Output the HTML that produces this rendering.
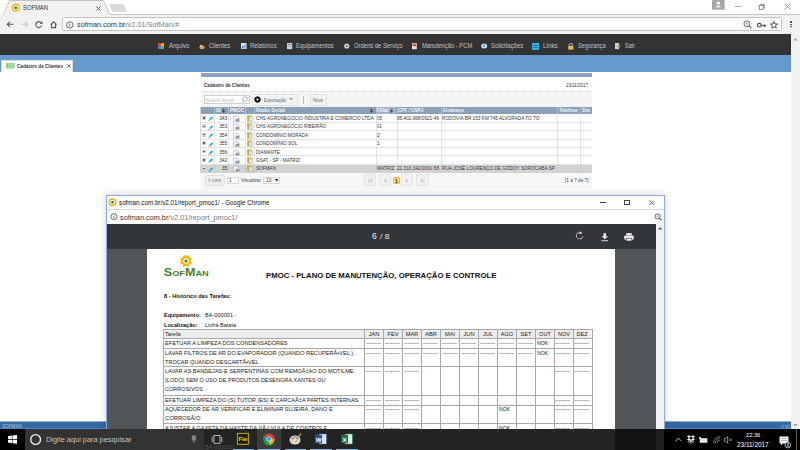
<!DOCTYPE html>
<html><head><meta charset="utf-8">
<style>
*{margin:0;padding:0;box-sizing:border-box}
html,body{width:800px;height:450px;overflow:hidden;background:#fff;font-family:"Liberation Sans",sans-serif}
.a{position:absolute}
.t{position:absolute;white-space:nowrap;line-height:1}
svg{position:absolute;overflow:visible}
</style></head><body>
<div class="a" style="left:0px;top:0px;width:800px;height:14px;background:#fff"></div>
<div class="a" style="left:0px;top:14px;width:800px;height:20px;background:#f2f2f2"></div>
<svg style="left:0;top:0" width="800" height="15"><path d="M0 14.5 H3.5 L9.5 0.5 H103.5 L109.5 14.5 H800" fill="#f2f2f2" stroke="#c4c4c4" stroke-width="1"/><path d="M109 4 H122.5 Q123.5 4 124 5 L126.5 11 Q127 12 126 12 H113.5 Q112.5 12 112 11 L109.5 5 Q109 4 110 4Z" fill="#dadada"/></svg>
<div class="a" style="left:0px;top:14px;width:3px;height:1px;background:#f2f2f2"></div>
<svg style="left:11px;top:3px" width="10" height="10"><circle cx="4.8" cy="4.8" r="4" fill="#f3b517"/><circle cx="4.8" cy="4.8" r="2.5" fill="#fff"/><circle cx="4.8" cy="4.8" r="1.4" fill="#1f6b1f"/></svg>
<svg style="left:23px;top:-10px" width="10" height="30"><text x="0" y="20.00" font-family="Liberation Sans" font-size="6.6" fill="#333" textLength="25" lengthAdjust="spacingAndGlyphs" style="white-space:pre;">SOFMAN</text></svg>
<svg style="left:96px;top:6px" width="5" height="5"><path d="M0.5 0.5L4.5 4.5M4.5 0.5L0.5 4.5" stroke="#555" stroke-width="1"/></svg>
<svg style="left:712px;top:0" width="13" height="10"><rect width="12.6" height="9.6" fill="#a6a6a6"/><circle cx="6.3" cy="3.2" r="1.6" fill="#fff"/><path d="M3.3 7.2 Q6.3 4.4 9.3 7.2 Z" fill="#fff"/></svg>
<div class="a" style="left:735.3px;top:5.5px;width:5.3px;height:0.8px;background:#aaa"></div>
<svg style="left:759px;top:4px" width="7" height="6"><rect x="0.4" y="1.4" width="3.9" height="3.9" fill="none" stroke="#777" stroke-width="0.8"/><path d="M1.6 1.4V0.4H5.3V4.1H4.3" fill="none" stroke="#777" stroke-width="0.8"/></svg>
<svg style="left:784px;top:3px" width="8" height="8"><path d="M0.5 0.5L6.5 6.5M6.5 0.5L0.5 6.5" stroke="#999" stroke-width="0.9"/></svg>
<svg style="left:6px;top:21px" width="9" height="8"><path d="M7.5 3.3H1.5M4 0.8L1.2 3.3L4 5.8" fill="none" stroke="#555" stroke-width="1.1"/></svg>
<svg style="left:21px;top:21px" width="9" height="8"><path d="M0.5 3.3H6.5M4 0.8L6.8 3.3L4 5.8" fill="none" stroke="#c6c6c6" stroke-width="1.1"/></svg>
<svg style="left:35px;top:21px" width="9" height="8"><path d="M6.3 2A3 3 0 1 0 6.6 4.6" fill="none" stroke="#555" stroke-width="1.1"/><path d="M7.5 0.3V3H4.8Z" fill="#555"/></svg>
<svg style="left:50px;top:20.5px" width="9" height="8"><path d="M0.6 3.6L3.6 0.8L6.6 3.6M1.6 2.9V6.6H5.6V2.9" fill="none" stroke="#555" stroke-width="1.1"/></svg>
<div class="a" style="left:62px;top:17px;width:719.5px;height:14.3px;background:#fff;border:1px solid #c2c2c2;border-radius:1.5px"></div>
<svg style="left:66px;top:20.5px" width="8" height="8"><circle cx="3.8" cy="3.9" r="3.2" fill="none" stroke="#555" stroke-width="0.9"/><rect x="3.35" y="3.2" width="0.9" height="2.4" fill="#555"/><rect x="3.35" y="1.9" width="0.9" height="0.8" fill="#555"/></svg>
<svg style="left:76.8px;top:7px" width="10" height="30"><text x="0" y="20.00" font-family="Liberation Sans" font-size="7.35" fill="#333" textLength="102" lengthAdjust="spacingAndGlyphs" style="white-space:pre;">sofman.com.br<tspan fill="#808080">/v2.01/SofMan/#</tspan></text></svg>
<svg style="left:743px;top:20px" width="10" height="10"><circle cx="3.8" cy="3.8" r="2.9" fill="none" stroke="#555" stroke-width="0.9"/><path d="M5.9 5.9L8.3 8.3" stroke="#555" stroke-width="1.1"/><path d="M2.5 3.8H5.1M3.8 2.5V5.1" stroke="#777" stroke-width="0.6"/></svg>
<svg style="left:757px;top:21.5px" width="10" height="7"><circle cx="2.3" cy="3.2" r="1.8" fill="none" stroke="#444" stroke-width="1.1"/><path d="M4 3.2H8.6M7.2 3.2V5M8.4 3.2V4.6" stroke="#444" stroke-width="1.1"/></svg>
<svg style="left:770px;top:20.5px" width="9" height="9"><path d="M4 0.6L5 3H7.7L5.5 4.6L6.3 7.3L4 5.7L1.7 7.3L2.5 4.6L0.3 3H3Z" fill="none" stroke="#444" stroke-width="0.9"/></svg>
<div class="a" style="left:790.3px;top:21.3px;width:1.3px;height:1.3px;background:#555"></div>
<div class="a" style="left:790.3px;top:23.6px;width:1.3px;height:1.3px;background:#555"></div>
<div class="a" style="left:790.3px;top:25.9px;width:1.3px;height:1.3px;background:#555"></div>
<div class="a" style="left:0px;top:34px;width:791px;height:21px;background:#333"></div>
<svg style="left:168.8px;top:28px" width="10" height="30"><text x="0" y="20.00" font-family="Liberation Sans" font-size="6.8" fill="#c4c4c4" textLength="20.4" lengthAdjust="spacingAndGlyphs" style="white-space:pre;">Arquivo</text></svg>
<svg style="left:158px;top:42.8px" width="7" height="7"><rect width="3" height="3" fill="#e8412b"/><rect x="3" width="3" height="3" fill="#f2bb10"/><rect y="3" width="3" height="3" fill="#2a8ee8"/><rect x="3" y="3" width="3" height="3" fill="#7db11f"/></svg>
<svg style="left:208.8px;top:28px" width="10" height="30"><text x="0" y="20.00" font-family="Liberation Sans" font-size="6.8" fill="#c4c4c4" textLength="21.2" lengthAdjust="spacingAndGlyphs" style="white-space:pre;">Clientes</text></svg>
<svg style="left:199px;top:43.5px" width="6" height="6"><ellipse cx="3" cy="3.2" rx="2.6" ry="2" fill="#d89a6a"/><circle cx="2" cy="1.8" r="1.1" fill="#e8b888"/></svg>
<svg style="left:250px;top:28px" width="10" height="30"><text x="0" y="20.00" font-family="Liberation Sans" font-size="6.8" fill="#c4c4c4" textLength="26.6" lengthAdjust="spacingAndGlyphs" style="white-space:pre;">Relatórios</text></svg>
<svg style="left:240.5px;top:43px" width="6" height="7"><rect width="5.5" height="6" fill="#dfe6ef"/><rect x="0.8" y="3" width="1.2" height="2.5" fill="#3a7bd5"/><rect x="2.5" y="1.5" width="1.2" height="4" fill="#5c9ee8"/><rect x="4" y="0.8" width="1.2" height="4.7" fill="#f0c030"/></svg>
<svg style="left:296.25px;top:28px" width="10" height="30"><text x="0" y="20.00" font-family="Liberation Sans" font-size="6.8" fill="#c4c4c4" textLength="37.6" lengthAdjust="spacingAndGlyphs" style="white-space:pre;">Equipamentos</text></svg>
<svg style="left:286.6px;top:42.8px" width="6" height="7"><rect width="5.2" height="6.2" fill="#c8d0dc"/><rect x="1" y="1" width="3.2" height="1.2" fill="#7e8ea8"/><rect x="1" y="3" width="3.2" height="0.8" fill="#9aa6b8"/></svg>
<svg style="left:353.7px;top:28px" width="10" height="30"><text x="0" y="20.00" font-family="Liberation Sans" font-size="6.8" fill="#c4c4c4" textLength="48.4" lengthAdjust="spacingAndGlyphs" style="white-space:pre;">Ordens de Serviço</text></svg>
<svg style="left:343.5px;top:43px" width="6" height="6"><circle cx="2.8" cy="3" r="2.6" fill="#c9ced6"/><circle cx="2.8" cy="3" r="1" fill="#6b7686"/></svg>
<svg style="left:421.6px;top:28px" width="10" height="30"><text x="0" y="20.00" font-family="Liberation Sans" font-size="6.8" fill="#c4c4c4" textLength="50.3" lengthAdjust="spacingAndGlyphs" style="white-space:pre;">Manutenção - PCM</text></svg>
<svg style="left:411.6px;top:42.8px" width="6" height="7"><rect width="4.8" height="6.2" fill="#e8e8e8"/><rect x="0.5" y="0.5" width="3.8" height="3" fill="#e0504a"/></svg>
<svg style="left:490.75px;top:28px" width="10" height="30"><text x="0" y="20.00" font-family="Liberation Sans" font-size="6.8" fill="#c4c4c4" textLength="32.3" lengthAdjust="spacingAndGlyphs" style="white-space:pre;">Solicitações</text></svg>
<svg style="left:480.6px;top:43.2px" width="7" height="6"><ellipse cx="3.2" cy="2.9" rx="3" ry="2.5" fill="#d6e4f2"/><circle cx="3.2" cy="2.9" r="1.3" fill="#6a9bd8"/></svg>
<svg style="left:543.4px;top:28px" width="10" height="30"><text x="0" y="20.00" font-family="Liberation Sans" font-size="6.8" fill="#c4c4c4" textLength="14.8" lengthAdjust="spacingAndGlyphs" style="white-space:pre;">Links</text></svg>
<svg style="left:532.4px;top:42.5px" width="8" height="8"><rect width="7" height="7" fill="#3ab0e8"/><rect x="1" y="2.2" width="5" height="0.7" fill="#1a5c8a"/><rect x="1" y="4.2" width="5" height="0.7" fill="#1a5c8a"/></svg>
<svg style="left:577.5px;top:28px" width="10" height="30"><text x="0" y="20.00" font-family="Liberation Sans" font-size="6.8" fill="#c4c4c4" textLength="27.6" lengthAdjust="spacingAndGlyphs" style="white-space:pre;">Segurança</text></svg>
<svg style="left:567.9px;top:42.5px" width="6" height="7"><path d="M1.2 3V2A1.6 1.6 0 0 1 4.4 2V3" fill="none" stroke="#ccc" stroke-width="0.8"/><rect x="0.3" y="3" width="5" height="3.6" fill="#e8c040"/></svg>
<svg style="left:624.75px;top:28px" width="10" height="30"><text x="0" y="20.00" font-family="Liberation Sans" font-size="6.8" fill="#c4c4c4" textLength="9.7" lengthAdjust="spacingAndGlyphs" style="white-space:pre;">Sair</text></svg>
<svg style="left:615.1px;top:42.8px" width="6" height="7"><rect width="4" height="6.2" fill="#d0d0d0"/><path d="M2 3.1H5.2M3.8 1.8L5.4 3.1L3.8 4.4" stroke="#38b838" stroke-width="1" fill="none"/></svg>
<div class="a" style="left:0px;top:55px;width:791px;height:17px;background:#6699cc"></div>
<div class="a" style="left:1px;top:59.5px;width:72px;height:12.5px;background:#fff;border:1px solid #dcdcdc;border-bottom:none;border-radius:1px 1px 0 0"></div>
<svg style="left:6px;top:63px" width="9" height="6"><rect width="8.5" height="5.5" fill="#8fd28f"/><path d="M2.8 0.5V5M5.6 0.5V5" stroke="#d8f0d8" stroke-width="0.6"/></svg>
<svg style="left:17px;top:48px" width="10" height="30"><text x="0" y="20.00" font-family="Liberation Sans" font-size="5" fill="#333" textLength="46" lengthAdjust="spacingAndGlyphs" font-weight="bold" style="white-space:pre;">Cadastro de Clientes</text></svg>
<svg style="left:66.5px;top:63.5px" width="4" height="4"><path d="M0.3 0.3L3.5 3.5M3.5 0.3L0.3 3.5" stroke="#444" stroke-width="0.9"/></svg>
<div class="a" style="left:791px;top:34px;width:9px;height:395px;background:#f1f1f1"></div>
<svg style="left:793px;top:37.5px" width="5" height="3"><path d="M0 2.6L2.4 0L4.8 2.6Z" fill="#a3a3a3"/></svg>
<svg style="left:793px;top:424px" width="5" height="3"><path d="M0 0L2.4 2.6L4.8 0Z" fill="#a3a3a3"/></svg>
<div class="a" style="left:0px;top:421px;width:791px;height:1px;background:#9ab0c8"></div>
<div class="a" style="left:0px;top:421.8px;width:791px;height:7.2px;background:#3568a0"></div>
<div class="a" style="left:0px;top:428.3px;width:791px;height:0.8px;background:#4a86c8"></div>
<svg style="left:2px;top:407px" width="10" height="30"><text x="0" y="20.60" font-family="Liberation Sans" font-size="4.6" fill="#b4c4d6" textLength="20" lengthAdjust="spacingAndGlyphs" style="white-space:pre;">SOFMAN</text></svg>
<svg style="left:781px;top:407px" width="10" height="30"><text x="0" y="20.60" font-family="Liberation Sans" font-size="4.6" fill="#8aa4c4" textLength="9" lengthAdjust="spacingAndGlyphs" style="white-space:pre;">trial</text></svg>
<div class="a" style="left:200.5px;top:73px;width:391.5px;height:116px;background:#fff;border-radius:0 0 2px 2px"></div>
<div class="a" style="left:200.5px;top:73px;width:391.5px;height:4px;background:#8aa3c1"></div>
<svg style="left:204px;top:67px" width="10" height="30"><text x="0" y="20.00" font-family="Liberation Sans" font-size="5.2" fill="#333" textLength="45.75" lengthAdjust="spacingAndGlyphs" font-weight="bold" style="white-space:pre;">Cadastro de Clientes</text></svg>
<svg style="left:566px;top:67px" width="10" height="30"><text x="0" y="20.00" font-family="Liberation Sans" font-size="5" fill="#333" textLength="22" lengthAdjust="spacingAndGlyphs" style="white-space:pre;">23/11/2017</text></svg>
<div class="a" style="left:200.5px;top:91px;width:391.5px;height:1px;border-top:1px dotted #d6d6d6"></div>
<div class="a" style="left:200.5px;top:92px;width:391.5px;height:15px;background:#f5f5f5"></div>
<div class="a" style="left:204px;top:95px;width:46px;height:9px;background:#fff;border:1px solid #d0d0d0"></div>
<svg style="left:205.6px;top:81px" width="10" height="30"><text x="0" y="20.50" font-family="Liberation Sans" font-size="4.8" fill="#c4bccc" textLength="27.4" lengthAdjust="spacingAndGlyphs" style="white-space:pre;">Busca rápida</text></svg>
<svg style="left:240.5px;top:96px" width="7" height="7"><circle cx="4.1" cy="3" r="2.2" fill="none" stroke="#777" stroke-width="0.6"/><path d="M2.5 4.6L1 6.1" stroke="#777" stroke-width="0.7"/></svg>
<div class="a" style="left:251.5px;top:93.5px;width:46px;height:12px;background:#f2f2f2;border:1px solid #e2e2e2;border-radius:2px"></div>
<svg style="left:254px;top:95.7px" width="8" height="8"><circle cx="3.5" cy="3.5" r="2.4" fill="none" stroke="#111" stroke-width="1.4"/><path d="M3.5 0.2V6.8M0.2 3.5H6.8M1.2 1.2L5.8 5.8M5.8 1.2L1.2 5.8" stroke="#111" stroke-width="0.9"/><circle cx="3.5" cy="3.5" r="1" fill="#f2f2f2"/></svg>
<svg style="left:264px;top:81px" width="10" height="30"><text x="0" y="20.50" font-family="Liberation Sans" font-size="4.9" fill="#666" textLength="22" lengthAdjust="spacingAndGlyphs" style="white-space:pre;">Exportação</text></svg>
<svg style="left:289px;top:98.3px" width="5" height="3"><path d="M0 0H4.2L2.1 2.2Z" fill="#999"/></svg>
<div class="a" style="left:303px;top:96px;width:0.9px;height:7.5px;background:#bbb"></div>
<div class="a" style="left:309.5px;top:93.5px;width:17.5px;height:12px;background:#f2f2f2;border:1px solid #e2e2e2;border-radius:2px"></div>
<svg style="left:313px;top:81px" width="10" height="30"><text x="0" y="20.50" font-family="Liberation Sans" font-size="4.9" fill="#666" textLength="10" lengthAdjust="spacingAndGlyphs" style="white-space:pre;">Novo</text></svg>
<div class="a" style="left:200.5px;top:107.2px;width:391.5px;height:6.6px;background:#8aa0b8"></div>
<div class="a" style="left:375.6px;top:107.2px;width:20.9px;height:6.6px;background:#a3b5cc"></div>
<div class="a" style="left:214.2px;top:107.2px;width:0.7px;height:6.6px;background:#b0bfd0"></div>
<div class="a" style="left:228.2px;top:107.2px;width:0.7px;height:6.6px;background:#b0bfd0"></div>
<div class="a" style="left:245.2px;top:107.2px;width:0.7px;height:6.6px;background:#b0bfd0"></div>
<div class="a" style="left:254.4px;top:107.2px;width:0.7px;height:6.6px;background:#b0bfd0"></div>
<div class="a" style="left:375.6px;top:107.2px;width:0.7px;height:6.6px;background:#b0bfd0"></div>
<div class="a" style="left:396.5px;top:107.2px;width:0.7px;height:6.6px;background:#b0bfd0"></div>
<div class="a" style="left:441.25px;top:107.2px;width:0.7px;height:6.6px;background:#b0bfd0"></div>
<div class="a" style="left:557.2px;top:107.2px;width:0.7px;height:6.6px;background:#b0bfd0"></div>
<div class="a" style="left:579.7px;top:107.2px;width:0.7px;height:6.6px;background:#b0bfd0"></div>
<svg style="left:216px;top:92px" width="10" height="30"><text x="0" y="20.30" font-family="Liberation Sans" font-size="4.6" fill="#f2f5fa" textLength="5" lengthAdjust="spacingAndGlyphs" font-weight="bold" style="white-space:pre;">ID</text></svg>
<svg style="left:230px;top:92px" width="10" height="30"><text x="0" y="20.30" font-family="Liberation Sans" font-size="4.6" fill="#f2f5fa" textLength="14" lengthAdjust="spacingAndGlyphs" font-weight="bold" style="white-space:pre;">PMOC</text></svg>
<svg style="left:256px;top:92px" width="10" height="30"><text x="0" y="20.30" font-family="Liberation Sans" font-size="4.6" fill="#f2f5fa" textLength="29" lengthAdjust="spacingAndGlyphs" font-weight="bold" style="white-space:pre;">Razão Social</text></svg>
<svg style="left:376.9px;top:92px" width="10" height="30"><text x="0" y="20.30" font-family="Liberation Sans" font-size="4.6" fill="#f2f5fa" textLength="11" lengthAdjust="spacingAndGlyphs" font-weight="bold" style="white-space:pre;">Filial</text></svg>
<svg style="left:397.75px;top:92px" width="10" height="30"><text x="0" y="20.30" font-family="Liberation Sans" font-size="4.6" fill="#f2f5fa" textLength="25.3" lengthAdjust="spacingAndGlyphs" font-weight="bold" style="white-space:pre;">CPF / CNPJ</text></svg>
<svg style="left:442.75px;top:92px" width="10" height="30"><text x="0" y="20.30" font-family="Liberation Sans" font-size="4.6" fill="#f2f5fa" textLength="21" lengthAdjust="spacingAndGlyphs" font-weight="bold" style="white-space:pre;">Endereço</text></svg>
<svg style="left:559.1px;top:92px" width="10" height="30"><text x="0" y="20.30" font-family="Liberation Sans" font-size="4.6" fill="#f2f5fa" textLength="18.7" lengthAdjust="spacingAndGlyphs" font-weight="bold" style="white-space:pre;">Telefone</text></svg>
<svg style="left:581.7px;top:92px" width="10" height="30"><text x="0" y="20.30" font-family="Liberation Sans" font-size="4.6" fill="#f2f5fa" textLength="8.3" lengthAdjust="spacingAndGlyphs" font-weight="bold" style="white-space:pre;">Site</text></svg>
<svg style="left:222.3px;top:108.6px" width="3" height="4"><path d="M1.5 0L3 1.6H0Z M1.5 3.8L3 2.2H0Z" fill="#222"/></svg>
<svg style="left:369.75px;top:108.6px" width="3" height="4"><path d="M1.5 0L3 1.6H0Z M1.5 3.8L3 2.2H0Z" fill="#222"/></svg>
<svg style="left:389.75px;top:108.6px" width="3" height="4"><path d="M1.5 0L3 1.6H0Z M1.5 3.8L3 2.2H0Z" fill="#222"/></svg>
<div class="a" style="left:200.5px;top:113.8px;width:391.5px;height:50.34px;background:#fff"></div>
<div class="a" style="left:200.5px;top:164.14px;width:391.5px;height:8.39px;background:#d3d3d3"></div>
<div class="a" style="left:200.5px;top:121.78999999999999px;width:391.5px;height:0.8px;background:#e2e2e2"></div>
<div class="a" style="left:214.2px;top:113.8px;width:0.8px;height:8.39px;background:#e4e4e4"></div>
<div class="a" style="left:228.2px;top:113.8px;width:0.8px;height:8.39px;background:#e4e4e4"></div>
<div class="a" style="left:245.2px;top:113.8px;width:0.8px;height:8.39px;background:#e4e4e4"></div>
<div class="a" style="left:254.4px;top:113.8px;width:0.8px;height:8.39px;background:#e4e4e4"></div>
<div class="a" style="left:375.6px;top:113.8px;width:0.8px;height:8.39px;background:#e4e4e4"></div>
<div class="a" style="left:396.5px;top:113.8px;width:0.8px;height:8.39px;background:#e4e4e4"></div>
<div class="a" style="left:441.25px;top:113.8px;width:0.8px;height:8.39px;background:#e4e4e4"></div>
<div class="a" style="left:557.2px;top:113.8px;width:0.8px;height:8.39px;background:#e4e4e4"></div>
<div class="a" style="left:579.7px;top:113.8px;width:0.8px;height:8.39px;background:#e4e4e4"></div>
<div class="a" style="left:202.2px;top:116.0px;width:3.9px;height:3.9px;background:#e6e6e6;border:0.5px solid #d0d0d0"></div>
<div class="a" style="left:203.4px;top:117.2px;width:1.5px;height:1.5px;background:#666"></div>
<svg style="left:207.5px;top:116.40px" width="6" height="6"><path d="M4 1.4L2.2 3.2" stroke="#2aaee8" stroke-width="1.9" stroke-linecap="round"/><path d="M1.3 4.2L0.6 5" stroke="#665" stroke-width="0.9"/></svg>
<svg style="left:227px;top:100px" width="10" height="30"><text x="0" y="20.10" font-family="Liberation Sans" font-size="5" fill="#333" text-anchor="end" style="white-space:pre;letter-spacing:-0.2px">343</text></svg>
<svg style="left:233px;top:115.00px" width="8" height="8"><path d="M0.6 1.3H4.2L6.2 3.2V6.3H0.6Z" fill="#fbfbfb" stroke="#a4a4a4" stroke-width="0.55"/><path d="M3.6 0.4L5.6 2.1" stroke="#b0b0b0" stroke-width="0.5"/><path d="M2.6 3.6H6.3V6.6H2.6Z" fill="#9fb2c6"/><path d="M3 4.2H5.9V5.8H3Z" fill="#7f95ad"/></svg>
<svg style="left:247px;top:115.00px" width="7" height="8"><path d="M0.2 0.3H4.2V1.6H0.2Z" fill="#d8c248"/><path d="M0.2 0.3H2.2V6.5H0.2Z" fill="#c9b23a"/><path d="M2 2H5.6V6.4H2Z" fill="#e6e8ec" stroke="#9a9ea6" stroke-width="0.45"/><path d="M4.2 0.3L5.2 1.5V2H4.2Z" fill="#b8a434"/></svg>
<svg style="left:256.2px;top:100px" width="10" height="30"><text x="0" y="20.10" font-family="Liberation Sans" font-size="5" fill="#333" textLength="117.6" lengthAdjust="spacingAndGlyphs" style="white-space:pre;">CHS AGRONEGOCIO INDUSTRIA E COMERCIO LTDA</text></svg>
<svg style="left:377.1px;top:100px" width="10" height="30"><text x="0" y="20.10" font-family="Liberation Sans" font-size="5" fill="#333" textLength="4.8" lengthAdjust="spacingAndGlyphs" style="white-space:pre;">05</text></svg>
<svg style="left:397.3px;top:100px" width="10" height="30"><text x="0" y="20.10" font-family="Liberation Sans" font-size="5" fill="#333" textLength="42" lengthAdjust="spacingAndGlyphs" style="white-space:pre;">95.402.968/0621-46</text></svg>
<svg style="left:442.4px;top:100px" width="10" height="30"><text x="0" y="20.10" font-family="Liberation Sans" font-size="5" fill="#333" textLength="97.4" lengthAdjust="spacingAndGlyphs" style="white-space:pre;">RODOVIA BR 153 KM 745 ALVORADA TO TO</text></svg>
<div class="a" style="left:200.5px;top:130.17999999999998px;width:391.5px;height:0.8px;background:#e2e2e2"></div>
<div class="a" style="left:214.2px;top:122.19px;width:0.8px;height:8.39px;background:#e4e4e4"></div>
<div class="a" style="left:228.2px;top:122.19px;width:0.8px;height:8.39px;background:#e4e4e4"></div>
<div class="a" style="left:245.2px;top:122.19px;width:0.8px;height:8.39px;background:#e4e4e4"></div>
<div class="a" style="left:254.4px;top:122.19px;width:0.8px;height:8.39px;background:#e4e4e4"></div>
<div class="a" style="left:375.6px;top:122.19px;width:0.8px;height:8.39px;background:#e4e4e4"></div>
<div class="a" style="left:396.5px;top:122.19px;width:0.8px;height:8.39px;background:#e4e4e4"></div>
<div class="a" style="left:441.25px;top:122.19px;width:0.8px;height:8.39px;background:#e4e4e4"></div>
<div class="a" style="left:557.2px;top:122.19px;width:0.8px;height:8.39px;background:#e4e4e4"></div>
<div class="a" style="left:579.7px;top:122.19px;width:0.8px;height:8.39px;background:#e4e4e4"></div>
<div class="a" style="left:202.2px;top:124.39px;width:3.9px;height:3.9px;background:#e6e6e6;border:0.5px solid #d0d0d0"></div>
<div class="a" style="left:203.4px;top:125.59px;width:1.5px;height:1.5px;background:#666"></div>
<svg style="left:207.5px;top:124.79px" width="6" height="6"><path d="M4 1.4L2.2 3.2" stroke="#2aaee8" stroke-width="1.9" stroke-linecap="round"/><path d="M1.3 4.2L0.6 5" stroke="#665" stroke-width="0.9"/></svg>
<svg style="left:227px;top:108px" width="10" height="30"><text x="0" y="20.49" font-family="Liberation Sans" font-size="5" fill="#333" text-anchor="end" style="white-space:pre;letter-spacing:-0.2px">353</text></svg>
<svg style="left:233px;top:123.39px" width="8" height="8"><path d="M0.6 1.3H4.2L6.2 3.2V6.3H0.6Z" fill="#fbfbfb" stroke="#a4a4a4" stroke-width="0.55"/><path d="M3.6 0.4L5.6 2.1" stroke="#b0b0b0" stroke-width="0.5"/><path d="M2.6 3.6H6.3V6.6H2.6Z" fill="#9fb2c6"/><path d="M3 4.2H5.9V5.8H3Z" fill="#7f95ad"/></svg>
<svg style="left:247px;top:123.39px" width="7" height="8"><path d="M0.2 0.3H4.2V1.6H0.2Z" fill="#d8c248"/><path d="M0.2 0.3H2.2V6.5H0.2Z" fill="#c9b23a"/><path d="M2 2H5.6V6.4H2Z" fill="#e6e8ec" stroke="#9a9ea6" stroke-width="0.45"/><path d="M4.2 0.3L5.2 1.5V2H4.2Z" fill="#b8a434"/></svg>
<svg style="left:256.2px;top:108px" width="10" height="30"><text x="0" y="20.49" font-family="Liberation Sans" font-size="5" fill="#333" textLength="70.2" lengthAdjust="spacingAndGlyphs" style="white-space:pre;">CHS AGRONEGÓCIO RIBEIRÃO</text></svg>
<svg style="left:377.1px;top:108px" width="10" height="30"><text x="0" y="20.49" font-family="Liberation Sans" font-size="5" fill="#333" textLength="4.8" lengthAdjust="spacingAndGlyphs" style="white-space:pre;">01</text></svg>
<div class="a" style="left:200.5px;top:138.56999999999996px;width:391.5px;height:0.8px;background:#e2e2e2"></div>
<div class="a" style="left:214.2px;top:130.57999999999998px;width:0.8px;height:8.39px;background:#e4e4e4"></div>
<div class="a" style="left:228.2px;top:130.57999999999998px;width:0.8px;height:8.39px;background:#e4e4e4"></div>
<div class="a" style="left:245.2px;top:130.57999999999998px;width:0.8px;height:8.39px;background:#e4e4e4"></div>
<div class="a" style="left:254.4px;top:130.57999999999998px;width:0.8px;height:8.39px;background:#e4e4e4"></div>
<div class="a" style="left:375.6px;top:130.57999999999998px;width:0.8px;height:8.39px;background:#e4e4e4"></div>
<div class="a" style="left:396.5px;top:130.57999999999998px;width:0.8px;height:8.39px;background:#e4e4e4"></div>
<div class="a" style="left:441.25px;top:130.57999999999998px;width:0.8px;height:8.39px;background:#e4e4e4"></div>
<div class="a" style="left:557.2px;top:130.57999999999998px;width:0.8px;height:8.39px;background:#e4e4e4"></div>
<div class="a" style="left:579.7px;top:130.57999999999998px;width:0.8px;height:8.39px;background:#e4e4e4"></div>
<div class="a" style="left:202.2px;top:132.77999999999997px;width:3.9px;height:3.9px;background:#e6e6e6;border:0.5px solid #d0d0d0"></div>
<div class="a" style="left:203.4px;top:133.98px;width:1.5px;height:1.5px;background:#666"></div>
<svg style="left:207.5px;top:133.18px" width="6" height="6"><path d="M4 1.4L2.2 3.2" stroke="#2aaee8" stroke-width="1.9" stroke-linecap="round"/><path d="M1.3 4.2L0.6 5" stroke="#665" stroke-width="0.9"/></svg>
<svg style="left:227px;top:116px" width="10" height="30"><text x="0" y="20.88" font-family="Liberation Sans" font-size="5" fill="#333" text-anchor="end" style="white-space:pre;letter-spacing:-0.2px">354</text></svg>
<svg style="left:233px;top:131.78px" width="8" height="8"><path d="M0.6 1.3H4.2L6.2 3.2V6.3H0.6Z" fill="#fbfbfb" stroke="#a4a4a4" stroke-width="0.55"/><path d="M3.6 0.4L5.6 2.1" stroke="#b0b0b0" stroke-width="0.5"/><path d="M2.6 3.6H6.3V6.6H2.6Z" fill="#9fb2c6"/><path d="M3 4.2H5.9V5.8H3Z" fill="#7f95ad"/></svg>
<svg style="left:247px;top:131.78px" width="7" height="8"><path d="M0.2 0.3H4.2V1.6H0.2Z" fill="#d8c248"/><path d="M0.2 0.3H2.2V6.5H0.2Z" fill="#c9b23a"/><path d="M2 2H5.6V6.4H2Z" fill="#e6e8ec" stroke="#9a9ea6" stroke-width="0.45"/><path d="M4.2 0.3L5.2 1.5V2H4.2Z" fill="#b8a434"/></svg>
<svg style="left:256.2px;top:116px" width="10" height="30"><text x="0" y="20.88" font-family="Liberation Sans" font-size="5" fill="#333" textLength="52" lengthAdjust="spacingAndGlyphs" style="white-space:pre;">CONDOMÍNIO MORADA</text></svg>
<svg style="left:377.1px;top:116px" width="10" height="30"><text x="0" y="20.88" font-family="Liberation Sans" font-size="5" fill="#333" style="white-space:pre;">2</text></svg>
<div class="a" style="left:200.5px;top:146.96px;width:391.5px;height:0.8px;background:#e2e2e2"></div>
<div class="a" style="left:214.2px;top:138.97px;width:0.8px;height:8.39px;background:#e4e4e4"></div>
<div class="a" style="left:228.2px;top:138.97px;width:0.8px;height:8.39px;background:#e4e4e4"></div>
<div class="a" style="left:245.2px;top:138.97px;width:0.8px;height:8.39px;background:#e4e4e4"></div>
<div class="a" style="left:254.4px;top:138.97px;width:0.8px;height:8.39px;background:#e4e4e4"></div>
<div class="a" style="left:375.6px;top:138.97px;width:0.8px;height:8.39px;background:#e4e4e4"></div>
<div class="a" style="left:396.5px;top:138.97px;width:0.8px;height:8.39px;background:#e4e4e4"></div>
<div class="a" style="left:441.25px;top:138.97px;width:0.8px;height:8.39px;background:#e4e4e4"></div>
<div class="a" style="left:557.2px;top:138.97px;width:0.8px;height:8.39px;background:#e4e4e4"></div>
<div class="a" style="left:579.7px;top:138.97px;width:0.8px;height:8.39px;background:#e4e4e4"></div>
<div class="a" style="left:202.2px;top:141.17px;width:3.9px;height:3.9px;background:#e6e6e6;border:0.5px solid #d0d0d0"></div>
<div class="a" style="left:203.4px;top:142.37px;width:1.5px;height:1.5px;background:#666"></div>
<svg style="left:207.5px;top:141.57px" width="6" height="6"><path d="M4 1.4L2.2 3.2" stroke="#2aaee8" stroke-width="1.9" stroke-linecap="round"/><path d="M1.3 4.2L0.6 5" stroke="#665" stroke-width="0.9"/></svg>
<svg style="left:227px;top:125px" width="10" height="30"><text x="0" y="20.27" font-family="Liberation Sans" font-size="5" fill="#333" text-anchor="end" style="white-space:pre;letter-spacing:-0.2px">355</text></svg>
<svg style="left:233px;top:140.17px" width="8" height="8"><path d="M0.6 1.3H4.2L6.2 3.2V6.3H0.6Z" fill="#fbfbfb" stroke="#a4a4a4" stroke-width="0.55"/><path d="M3.6 0.4L5.6 2.1" stroke="#b0b0b0" stroke-width="0.5"/><path d="M2.6 3.6H6.3V6.6H2.6Z" fill="#9fb2c6"/><path d="M3 4.2H5.9V5.8H3Z" fill="#7f95ad"/></svg>
<svg style="left:247px;top:140.17px" width="7" height="8"><path d="M0.2 0.3H4.2V1.6H0.2Z" fill="#d8c248"/><path d="M0.2 0.3H2.2V6.5H0.2Z" fill="#c9b23a"/><path d="M2 2H5.6V6.4H2Z" fill="#e6e8ec" stroke="#9a9ea6" stroke-width="0.45"/><path d="M4.2 0.3L5.2 1.5V2H4.2Z" fill="#b8a434"/></svg>
<svg style="left:256.2px;top:125px" width="10" height="30"><text x="0" y="20.27" font-family="Liberation Sans" font-size="5" fill="#333" textLength="41.3" lengthAdjust="spacingAndGlyphs" style="white-space:pre;">CONDOMÍNIO SOL</text></svg>
<svg style="left:377.1px;top:125px" width="10" height="30"><text x="0" y="20.27" font-family="Liberation Sans" font-size="5" fill="#333" style="white-space:pre;">1</text></svg>
<div class="a" style="left:200.5px;top:155.35px;width:391.5px;height:0.8px;background:#e2e2e2"></div>
<div class="a" style="left:214.2px;top:147.36px;width:0.8px;height:8.39px;background:#e4e4e4"></div>
<div class="a" style="left:228.2px;top:147.36px;width:0.8px;height:8.39px;background:#e4e4e4"></div>
<div class="a" style="left:245.2px;top:147.36px;width:0.8px;height:8.39px;background:#e4e4e4"></div>
<div class="a" style="left:254.4px;top:147.36px;width:0.8px;height:8.39px;background:#e4e4e4"></div>
<div class="a" style="left:375.6px;top:147.36px;width:0.8px;height:8.39px;background:#e4e4e4"></div>
<div class="a" style="left:396.5px;top:147.36px;width:0.8px;height:8.39px;background:#e4e4e4"></div>
<div class="a" style="left:441.25px;top:147.36px;width:0.8px;height:8.39px;background:#e4e4e4"></div>
<div class="a" style="left:557.2px;top:147.36px;width:0.8px;height:8.39px;background:#e4e4e4"></div>
<div class="a" style="left:579.7px;top:147.36px;width:0.8px;height:8.39px;background:#e4e4e4"></div>
<div class="a" style="left:202.2px;top:149.56px;width:3.9px;height:3.9px;background:#e6e6e6;border:0.5px solid #d0d0d0"></div>
<div class="a" style="left:203.4px;top:150.76000000000002px;width:1.5px;height:1.5px;background:#666"></div>
<svg style="left:207.5px;top:149.96px" width="6" height="6"><path d="M4 1.4L2.2 3.2" stroke="#2aaee8" stroke-width="1.9" stroke-linecap="round"/><path d="M1.3 4.2L0.6 5" stroke="#665" stroke-width="0.9"/></svg>
<svg style="left:227px;top:133px" width="10" height="30"><text x="0" y="20.66" font-family="Liberation Sans" font-size="5" fill="#333" text-anchor="end" style="white-space:pre;letter-spacing:-0.2px">356</text></svg>
<svg style="left:233px;top:148.56px" width="8" height="8"><path d="M0.6 1.3H4.2L6.2 3.2V6.3H0.6Z" fill="#fbfbfb" stroke="#a4a4a4" stroke-width="0.55"/><path d="M3.6 0.4L5.6 2.1" stroke="#b0b0b0" stroke-width="0.5"/><path d="M2.6 3.6H6.3V6.6H2.6Z" fill="#9fb2c6"/><path d="M3 4.2H5.9V5.8H3Z" fill="#7f95ad"/></svg>
<svg style="left:247px;top:148.56px" width="7" height="8"><path d="M0.2 0.3H4.2V1.6H0.2Z" fill="#d8c248"/><path d="M0.2 0.3H2.2V6.5H0.2Z" fill="#c9b23a"/><path d="M2 2H5.6V6.4H2Z" fill="#e6e8ec" stroke="#9a9ea6" stroke-width="0.45"/><path d="M4.2 0.3L5.2 1.5V2H4.2Z" fill="#b8a434"/></svg>
<svg style="left:256.2px;top:133px" width="10" height="30"><text x="0" y="20.66" font-family="Liberation Sans" font-size="5" fill="#333" textLength="23.9" lengthAdjust="spacingAndGlyphs" style="white-space:pre;">DIAMANTE</text></svg>
<div class="a" style="left:200.5px;top:163.73999999999998px;width:391.5px;height:0.8px;background:#e2e2e2"></div>
<div class="a" style="left:214.2px;top:155.75px;width:0.8px;height:8.39px;background:#e4e4e4"></div>
<div class="a" style="left:228.2px;top:155.75px;width:0.8px;height:8.39px;background:#e4e4e4"></div>
<div class="a" style="left:245.2px;top:155.75px;width:0.8px;height:8.39px;background:#e4e4e4"></div>
<div class="a" style="left:254.4px;top:155.75px;width:0.8px;height:8.39px;background:#e4e4e4"></div>
<div class="a" style="left:375.6px;top:155.75px;width:0.8px;height:8.39px;background:#e4e4e4"></div>
<div class="a" style="left:396.5px;top:155.75px;width:0.8px;height:8.39px;background:#e4e4e4"></div>
<div class="a" style="left:441.25px;top:155.75px;width:0.8px;height:8.39px;background:#e4e4e4"></div>
<div class="a" style="left:557.2px;top:155.75px;width:0.8px;height:8.39px;background:#e4e4e4"></div>
<div class="a" style="left:579.7px;top:155.75px;width:0.8px;height:8.39px;background:#e4e4e4"></div>
<div class="a" style="left:202.2px;top:157.95px;width:3.9px;height:3.9px;background:#e6e6e6;border:0.5px solid #d0d0d0"></div>
<div class="a" style="left:203.4px;top:159.15px;width:1.5px;height:1.5px;background:#666"></div>
<svg style="left:207.5px;top:158.35px" width="6" height="6"><path d="M4 1.4L2.2 3.2" stroke="#2aaee8" stroke-width="1.9" stroke-linecap="round"/><path d="M1.3 4.2L0.6 5" stroke="#665" stroke-width="0.9"/></svg>
<svg style="left:227px;top:142px" width="10" height="30"><text x="0" y="20.05" font-family="Liberation Sans" font-size="5" fill="#333" text-anchor="end" style="white-space:pre;letter-spacing:-0.2px">342</text></svg>
<svg style="left:233px;top:156.95px" width="8" height="8"><path d="M0.6 1.3H4.2L6.2 3.2V6.3H0.6Z" fill="#fbfbfb" stroke="#a4a4a4" stroke-width="0.55"/><path d="M3.6 0.4L5.6 2.1" stroke="#b0b0b0" stroke-width="0.5"/><path d="M2.6 3.6H6.3V6.6H2.6Z" fill="#9fb2c6"/><path d="M3 4.2H5.9V5.8H3Z" fill="#7f95ad"/></svg>
<svg style="left:247px;top:156.95px" width="7" height="8"><path d="M0.2 0.3H4.2V1.6H0.2Z" fill="#d8c248"/><path d="M0.2 0.3H2.2V6.5H0.2Z" fill="#c9b23a"/><path d="M2 2H5.6V6.4H2Z" fill="#e6e8ec" stroke="#9a9ea6" stroke-width="0.45"/><path d="M4.2 0.3L5.2 1.5V2H4.2Z" fill="#b8a434"/></svg>
<svg style="left:256.2px;top:142px" width="10" height="30"><text x="0" y="20.05" font-family="Liberation Sans" font-size="5" fill="#333" textLength="43.9" lengthAdjust="spacingAndGlyphs" style="white-space:pre;">GSAT - SP - MATRIZ</text></svg>
<div class="a" style="left:214.2px;top:164.14px;width:0.7px;height:8.39px;background:#cbcbcb"></div>
<div class="a" style="left:228.2px;top:164.14px;width:0.7px;height:8.39px;background:#cbcbcb"></div>
<div class="a" style="left:245.2px;top:164.14px;width:0.7px;height:8.39px;background:#cbcbcb"></div>
<div class="a" style="left:254.4px;top:164.14px;width:0.7px;height:8.39px;background:#cbcbcb"></div>
<div class="a" style="left:375.6px;top:164.14px;width:0.7px;height:8.39px;background:#cbcbcb"></div>
<div class="a" style="left:396.5px;top:164.14px;width:0.7px;height:8.39px;background:#cbcbcb"></div>
<div class="a" style="left:441.25px;top:164.14px;width:0.7px;height:8.39px;background:#cbcbcb"></div>
<div class="a" style="left:557.2px;top:164.14px;width:0.7px;height:8.39px;background:#cbcbcb"></div>
<div class="a" style="left:579.7px;top:164.14px;width:0.7px;height:8.39px;background:#cbcbcb"></div>
<div class="a" style="left:202.2px;top:166.33999999999997px;width:3.9px;height:3.9px;background:#e6e6e6;border:0.5px solid #d0d0d0"></div>
<div class="a" style="left:203.4px;top:167.54px;width:1.5px;height:1.5px;background:#666"></div>
<svg style="left:207.5px;top:166.74px" width="6" height="6"><path d="M4 1.4L2.2 3.2" stroke="#2aaee8" stroke-width="1.9" stroke-linecap="round"/><path d="M1.3 4.2L0.6 5" stroke="#665" stroke-width="0.9"/></svg>
<svg style="left:227px;top:150px" width="10" height="30"><text x="0" y="20.44" font-family="Liberation Sans" font-size="5" fill="#333" text-anchor="end" style="white-space:pre;letter-spacing:-0.2px">35</text></svg>
<svg style="left:233px;top:165.34px" width="8" height="8"><path d="M0.6 1.3H4.2L6.2 3.2V6.3H0.6Z" fill="#fbfbfb" stroke="#a4a4a4" stroke-width="0.55"/><path d="M3.6 0.4L5.6 2.1" stroke="#b0b0b0" stroke-width="0.5"/><path d="M2.6 3.6H6.3V6.6H2.6Z" fill="#9fb2c6"/><path d="M3 4.2H5.9V5.8H3Z" fill="#7f95ad"/></svg>
<svg style="left:247px;top:165.34px" width="7" height="8"><path d="M0.2 0.3H4.2V1.6H0.2Z" fill="#d8c248"/><path d="M0.2 0.3H2.2V6.5H0.2Z" fill="#c9b23a"/><path d="M2 2H5.6V6.4H2Z" fill="#e6e8ec" stroke="#9a9ea6" stroke-width="0.45"/><path d="M4.2 0.3L5.2 1.5V2H4.2Z" fill="#b8a434"/></svg>
<svg style="left:256.2px;top:150px" width="10" height="30"><text x="0" y="20.44" font-family="Liberation Sans" font-size="5" fill="#333" textLength="19.8" lengthAdjust="spacingAndGlyphs" style="white-space:pre;">SOFMAN</text></svg>
<svg style="left:377.1px;top:150px" width="10" height="30"><text x="0" y="20.44" font-family="Liberation Sans" font-size="5" fill="#333" textLength="17.4" lengthAdjust="spacingAndGlyphs" style="white-space:pre;">MATRIZ</text></svg>
<svg style="left:397.3px;top:150px" width="10" height="30"><text x="0" y="20.44" font-family="Liberation Sans" font-size="5" fill="#333" textLength="42" lengthAdjust="spacingAndGlyphs" style="white-space:pre;">21.310.342/0001-58</text></svg>
<svg style="left:442.4px;top:150px" width="10" height="30"><text x="0" y="20.44" font-family="Liberation Sans" font-size="5" fill="#333" textLength="112.9" lengthAdjust="spacingAndGlyphs" style="white-space:pre;">RUA JOSÉ LOURENÇO DE GODOY SOROCABA SP</text></svg>
<div class="a" style="left:200.3px;top:107.2px;width:0.8px;height:65.5px;background:#d8d8d8"></div>
<div class="a" style="left:200.5px;top:172.5px;width:391.5px;height:16px;background:#f7f7f7;border-radius:0 0 2px 2px"></div>
<div class="a" style="left:204.5px;top:174.5px;width:20px;height:11.5px;background:#f0f0f0;border:1px solid #e0e0e0;border-radius:2px"></div>
<svg style="left:208px;top:162px" width="10" height="30"><text x="0" y="20.00" font-family="Liberation Sans" font-size="4.8" fill="#888" textLength="13" lengthAdjust="spacingAndGlyphs" style="white-space:pre;">Ir para</text></svg>
<div class="a" style="left:226.5px;top:176.5px;width:12px;height:7.5px;background:#fff;border:1px solid #d8d8d8"></div>
<svg style="left:228.8px;top:162px" width="10" height="30"><text x="0" y="20.30" font-family="Liberation Sans" font-size="4.8" fill="#333" style="white-space:pre;">1</text></svg>
<svg style="left:240.5px;top:162px" width="10" height="30"><text x="0" y="20.30" font-family="Liberation Sans" font-size="4.8" fill="#444" textLength="20" lengthAdjust="spacingAndGlyphs" style="white-space:pre;">Visualizar</text></svg>
<div class="a" style="left:262.5px;top:176.5px;width:17.5px;height:7.5px;background:#fff;border:1px solid #d8d8d8"></div>
<svg style="left:265.5px;top:162px" width="10" height="30"><text x="0" y="20.30" font-family="Liberation Sans" font-size="4.8" fill="#333" style="white-space:pre;">10</text></svg>
<svg style="left:274.5px;top:178.8px" width="4" height="3"><path d="M0 0H3.4L1.7 2.4Z" fill="#111"/></svg>
<div class="a" style="left:363.75px;top:174.4px;width:12.5px;height:11.9px;background:#f2f2f2;border:1px solid #e4e4e4;border-radius:2px"></div>
<svg style="left:367.5px;top:177.5px" width="5" height="6"><rect x="0.6" y="0.3" width="0.8" height="4.8" fill="#c4c4c4"/><path d="M4.2 0.3V5.1L1.6 2.7Z" fill="#c4c4c4"/></svg>
<div class="a" style="left:378.5px;top:174.4px;width:12.5px;height:11.9px;background:#f2f2f2;border:1px solid #e4e4e4;border-radius:2px"></div>
<svg style="left:382.75px;top:177.5px" width="5" height="6"><path d="M3.6 0.3V5.1L0.8 2.7Z" fill="#c4c4c4"/></svg>
<div class="a" style="left:400.6px;top:174.4px;width:12.899999999999977px;height:11.9px;background:#f2f2f2;border:1px solid #e4e4e4;border-radius:2px"></div>
<svg style="left:405.05px;top:177.5px" width="5" height="6"><path d="M0.8 0.3V5.1L3.6 2.7Z" fill="#c4c4c4"/></svg>
<div class="a" style="left:415.5px;top:174.4px;width:13.0px;height:11.9px;background:#f2f2f2;border:1px solid #e4e4e4;border-radius:2px"></div>
<svg style="left:419.5px;top:177.5px" width="5" height="6"><rect x="3.6" y="0.3" width="0.8" height="4.8" fill="#c4c4c4"/><path d="M0.8 0.3V5.1L3.4 2.7Z" fill="#c4c4c4"/></svg>
<div class="a" style="left:393px;top:177px;width:6.5px;height:7px;background:#fcd36e;border:0.5px solid #e8b84a;border-radius:1px"></div>
<svg style="left:394.8px;top:162px" width="10" height="30"><text x="0" y="20.50" font-family="Liberation Sans" font-size="4.8" fill="#333" font-weight="bold" style="white-space:pre;">1</text></svg>
<svg style="left:564.5px;top:162px" width="10" height="30"><text x="0" y="20.30" font-family="Liberation Sans" font-size="4.8" fill="#444" textLength="23.5" lengthAdjust="spacingAndGlyphs" style="white-space:pre;">[1 a 7 de 7]</text></svg>
<div class="a" style="left:106px;top:195px;width:559px;height:260px;box-shadow:0 -1px 7px 1px rgba(0,0,0,0.13)"></div>
<div class="a" style="left:106px;top:195px;width:559px;height:255px;background:#fff;border:1px solid #8aabdf;border-bottom:none"></div>
<svg style="left:108px;top:197.5px" width="9" height="9"><circle cx="4.4" cy="4.3" r="4" fill="#e9b21a"/><circle cx="4.4" cy="4.3" r="2.5" fill="#fff"/><circle cx="4.4" cy="4.3" r="1.3" fill="#2d6b1c"/></svg>
<svg style="left:119px;top:185px" width="10" height="30"><text x="0" y="20.00" font-family="Liberation Sans" font-size="6.4" fill="#111" textLength="150.5" lengthAdjust="spacingAndGlyphs" style="white-space:pre;">sofman.com.br/v2.01/report_pmoc1/ - Google Chrome</text></svg>
<div class="a" style="left:600.2px;top:202.2px;width:5.5px;height:0.9px;background:#444"></div>
<div class="a" style="left:624.2px;top:200.2px;width:5.8px;height:4.8px;border:0.9px solid #444"></div>
<svg style="left:649px;top:200.4px" width="6" height="6"><path d="M0.3 0.3L5 5M5 0.3L0.3 5" stroke="#444" stroke-width="0.8"/></svg>
<div class="a" style="left:107px;top:209px;width:557px;height:0.8px;background:#d6d6d6"></div>
<svg style="left:109.5px;top:213px" width="8" height="8"><circle cx="3.9" cy="3.6" r="3" fill="none" stroke="#444" stroke-width="0.8"/><rect x="3.5" y="3" width="0.8" height="2.2" fill="#444"/><rect x="3.5" y="1.8" width="0.8" height="0.7" fill="#444"/></svg>
<svg style="left:120px;top:199px" width="10" height="30"><text x="0" y="20.80" font-family="Liberation Sans" font-size="7.3" fill="#333" textLength="117.5" lengthAdjust="spacingAndGlyphs" style="white-space:pre;">sofman.com.br<tspan fill="#7a7a7a">/v2.01/report_pmoc1/</tspan></text></svg>
<svg style="left:653.5px;top:212.5px" width="9" height="9"><circle cx="3.5" cy="3.4" r="2.5" fill="none" stroke="#444" stroke-width="0.8"/><path d="M5.3 5.2L7.5 7.4" stroke="#444" stroke-width="1.1"/><path d="M2.4 3.4H4.6M3.5 2.3V4.5" stroke="#777" stroke-width="0.5"/></svg>
<div class="a" style="left:107px;top:223.5px;width:550px;height:227px;background:#525659"></div>
<div class="a" style="left:107px;top:223.5px;width:549px;height:25px;background:#323639"></div>
<div class="a" style="left:656px;top:223.5px;width:8px;height:227px;background:#f1f1f1"></div>
<svg style="left:658px;top:226.8px" width="5" height="3"><path d="M0 2.5L2.2 0L4.4 2.5Z" fill="#606060"/></svg>
<svg style="left:372.2px;top:219px" width="10" height="30"><text x="0" y="20.00" font-family="Liberation Sans" font-size="8.2" fill="#f1f1f1" textLength="4.7" lengthAdjust="spacingAndGlyphs" style="white-space:pre;">6</text></svg>
<svg style="left:380.2px;top:219px" width="10" height="30"><text x="0" y="20.00" font-family="Liberation Sans" font-size="6.4" fill="#e8e8e8" textLength="9.3" lengthAdjust="spacingAndGlyphs" style="white-space:pre;">/ 8</text></svg>
<svg style="left:574.5px;top:231px" width="10" height="10"><path d="M6.8 2.2A3.3 3.3 0 1 0 7.9 5.3" fill="none" stroke="#e8e8e8" stroke-width="1" stroke-dasharray="2.2 0.9"/><path d="M4.6 0.2L6.9 2.5L4.4 3.3Z" fill="#e8e8e8"/></svg>
<svg style="left:600.5px;top:232.5px" width="9" height="9"><path d="M2.5 0.3H5V3.3H7L3.75 6.3L0.5 3.3H2.5Z" fill="#f1f1f1"/><rect x="0.5" y="7.3" width="6.6" height="0.9" fill="#f1f1f1"/></svg>
<svg style="left:623.5px;top:232.5px" width="11" height="9"><rect x="2.2" y="0.2" width="5.6" height="2" fill="#f1f1f1"/><rect x="0.3" y="2.4" width="9.4" height="4.3" rx="1" fill="#f1f1f1"/><rect x="2.2" y="5.2" width="5.6" height="2.8" fill="#f1f1f1" stroke="#323639" stroke-width="0.6"/></svg>
<div class="a" style="left:146.5px;top:248.5px;width:468.5px;height:202px;background:#fff"></div>
<svg style="left:180.25px;top:255px" width="12" height="12"><circle cx="10.25" cy="7.76" r="1.4" fill="#f2b600"/><circle cx="7.76" cy="10.25" r="1.4" fill="#f2b600"/><circle cx="4.24" cy="10.25" r="1.4" fill="#f2b600"/><circle cx="1.75" cy="7.76" r="1.4" fill="#f2b600"/><circle cx="1.75" cy="4.24" r="1.4" fill="#f2b600"/><circle cx="4.24" cy="1.75" r="1.4" fill="#f2b600"/><circle cx="7.76" cy="1.75" r="1.4" fill="#f2b600"/><circle cx="10.25" cy="4.24" r="1.4" fill="#f2b600"/><circle cx="6" cy="6" r="4.5" fill="#f2b600"/><circle cx="6" cy="6" r="2.7" fill="#fff"/><circle cx="6" cy="6" r="1.5" fill="#3d7a28"/></svg>
<svg style="left:163px;top:260px" width="50" height="20"><text x="0.8" y="16" font-family="Liberation Sans" font-weight="bold" font-size="10.3" fill="#4a7f2c" textLength="45" lengthAdjust="spacingAndGlyphs">S<tspan font-size="7.6">OF</tspan>M<tspan font-size="7.6">AN</tspan></text></svg>
<svg style="left:265.6px;top:258px" width="10" height="30"><text x="0" y="20.00" font-family="Liberation Sans" font-size="7.75" fill="#111" textLength="230.4" lengthAdjust="spacingAndGlyphs" font-weight="bold" style="white-space:pre;">PMOC - PLANO DE MANUTENÇÃO, OPERAÇÃO E CONTROLE</text></svg>
<svg style="left:164px;top:278px" width="10" height="30"><text x="0" y="20.00" font-family="Liberation Sans" font-size="5.6" fill="#111" textLength="67" lengthAdjust="spacingAndGlyphs" font-weight="bold" style="white-space:pre;">8 - Histórico das Tarefas:</text></svg>
<svg style="left:164.4px;top:297px" width="10" height="30"><text x="0" y="20.00" font-family="Liberation Sans" font-size="5.6" fill="#111" textLength="36.6" lengthAdjust="spacingAndGlyphs" font-weight="bold" style="white-space:pre;">Equipamento:</text></svg>
<svg style="left:205px;top:297px" width="10" height="30"><text x="0" y="20.00" font-family="Liberation Sans" font-size="5.6" fill="#222" textLength="31.5" lengthAdjust="spacingAndGlyphs" style="white-space:pre;">BA-000001 -</text></svg>
<svg style="left:164.4px;top:306px" width="10" height="30"><text x="0" y="20.50" font-family="Liberation Sans" font-size="5.6" fill="#111" textLength="33.6" lengthAdjust="spacingAndGlyphs" font-weight="bold" style="white-space:pre;">Localização:</text></svg>
<svg style="left:205px;top:306px" width="10" height="30"><text x="0" y="20.50" font-family="Liberation Sans" font-size="5.6" fill="#222" textLength="31" lengthAdjust="spacingAndGlyphs" style="white-space:pre;">Linha Batata</text></svg>
<div class="a" style="left:162.6px;top:329.1px;width:428.9px;height:9.199999999999989px;background:#ececec"></div>
<div class="a" style="left:162.6px;top:329.1px;width:429.7px;height:0.9px;background:#a8a8a8"></div>
<div class="a" style="left:162.6px;top:338.3px;width:429.7px;height:0.9px;background:#a8a8a8"></div>
<div class="a" style="left:162.6px;top:348.1px;width:429.7px;height:0.9px;background:#a8a8a8"></div>
<div class="a" style="left:162.6px;top:366.1px;width:429.7px;height:0.9px;background:#a8a8a8"></div>
<div class="a" style="left:162.6px;top:395.4px;width:429.7px;height:0.9px;background:#a8a8a8"></div>
<div class="a" style="left:162.6px;top:404.5px;width:429.7px;height:0.9px;background:#a8a8a8"></div>
<div class="a" style="left:162.6px;top:423.1px;width:429.7px;height:0.9px;background:#a8a8a8"></div>
<div class="a" style="left:162.6px;top:441.5px;width:429.7px;height:0.9px;background:#a8a8a8"></div>
<div class="a" style="left:162.6px;top:329.1px;width:0.9px;height:120.89999999999998px;background:#a8a8a8"></div>
<div class="a" style="left:364.4px;top:329.1px;width:0.9px;height:120.89999999999998px;background:#a8a8a8"></div>
<div class="a" style="left:383.325px;top:329.1px;width:0.9px;height:120.89999999999998px;background:#a8a8a8"></div>
<div class="a" style="left:402.25px;top:329.1px;width:0.9px;height:120.89999999999998px;background:#a8a8a8"></div>
<div class="a" style="left:421.17499999999995px;top:329.1px;width:0.9px;height:120.89999999999998px;background:#a8a8a8"></div>
<div class="a" style="left:440.09999999999997px;top:329.1px;width:0.9px;height:120.89999999999998px;background:#a8a8a8"></div>
<div class="a" style="left:459.025px;top:329.1px;width:0.9px;height:120.89999999999998px;background:#a8a8a8"></div>
<div class="a" style="left:477.95px;top:329.1px;width:0.9px;height:120.89999999999998px;background:#a8a8a8"></div>
<div class="a" style="left:496.875px;top:329.1px;width:0.9px;height:120.89999999999998px;background:#a8a8a8"></div>
<div class="a" style="left:515.8px;top:329.1px;width:0.9px;height:120.89999999999998px;background:#a8a8a8"></div>
<div class="a" style="left:534.725px;top:329.1px;width:0.9px;height:120.89999999999998px;background:#a8a8a8"></div>
<div class="a" style="left:553.65px;top:329.1px;width:0.9px;height:120.89999999999998px;background:#a8a8a8"></div>
<div class="a" style="left:572.575px;top:329.1px;width:0.9px;height:120.89999999999998px;background:#a8a8a8"></div>
<div class="a" style="left:591.5px;top:329.1px;width:0.9px;height:120.89999999999998px;background:#a8a8a8"></div>
<svg style="left:165px;top:315px" width="10" height="30"><text x="0" y="20.70" font-family="Liberation Sans" font-size="5.6" fill="#222" style="white-space:pre;">Tarefa</text></svg>
<svg style="left:374.26249999999993px;top:315px" width="10" height="30"><text x="0" y="20.70" font-family="Liberation Sans" font-size="5.6" fill="#222" text-anchor="middle" style="white-space:pre;">JAN</text></svg>
<svg style="left:393.18749999999994px;top:315px" width="10" height="30"><text x="0" y="20.70" font-family="Liberation Sans" font-size="5.6" fill="#222" text-anchor="middle" style="white-space:pre;">FEV</text></svg>
<svg style="left:412.11249999999995px;top:315px" width="10" height="30"><text x="0" y="20.70" font-family="Liberation Sans" font-size="5.6" fill="#222" text-anchor="middle" style="white-space:pre;">MAR</text></svg>
<svg style="left:431.0374999999999px;top:315px" width="10" height="30"><text x="0" y="20.70" font-family="Liberation Sans" font-size="5.6" fill="#222" text-anchor="middle" style="white-space:pre;">ABR</text></svg>
<svg style="left:449.9624999999999px;top:315px" width="10" height="30"><text x="0" y="20.70" font-family="Liberation Sans" font-size="5.6" fill="#222" text-anchor="middle" style="white-space:pre;">MAI</text></svg>
<svg style="left:468.88749999999993px;top:315px" width="10" height="30"><text x="0" y="20.70" font-family="Liberation Sans" font-size="5.6" fill="#222" text-anchor="middle" style="white-space:pre;">JUN</text></svg>
<svg style="left:487.81249999999994px;top:315px" width="10" height="30"><text x="0" y="20.70" font-family="Liberation Sans" font-size="5.6" fill="#222" text-anchor="middle" style="white-space:pre;">JUL</text></svg>
<svg style="left:506.73749999999995px;top:315px" width="10" height="30"><text x="0" y="20.70" font-family="Liberation Sans" font-size="5.6" fill="#222" text-anchor="middle" style="white-space:pre;">AGO</text></svg>
<svg style="left:525.6624999999999px;top:315px" width="10" height="30"><text x="0" y="20.70" font-family="Liberation Sans" font-size="5.6" fill="#222" text-anchor="middle" style="white-space:pre;">SET</text></svg>
<svg style="left:544.5875px;top:315px" width="10" height="30"><text x="0" y="20.70" font-family="Liberation Sans" font-size="5.6" fill="#222" text-anchor="middle" style="white-space:pre;">OUT</text></svg>
<svg style="left:563.5124999999999px;top:315px" width="10" height="30"><text x="0" y="20.70" font-family="Liberation Sans" font-size="5.6" fill="#222" text-anchor="middle" style="white-space:pre;">NOV</text></svg>
<svg style="left:582.4375px;top:315px" width="10" height="30"><text x="0" y="20.70" font-family="Liberation Sans" font-size="5.6" fill="#222" text-anchor="middle" style="white-space:pre;">DEZ</text></svg>
<svg style="left:164.9px;top:325px" width="10" height="30"><text x="0" y="20.00" font-family="Liberation Sans" font-size="5.6" fill="#1a1a1a" textLength="122.6" lengthAdjust="spacingAndGlyphs" style="white-space:pre;">EFETUAR A LIMPEZA DOS CONDENSADORES</text></svg>
<svg style="left:366.09999999999997px;top:324px" width="10" height="30"><text x="0" y="20.90" font-family="Liberation Sans" font-size="5.6" fill="#222" textLength="15" lengthAdjust="spacingAndGlyphs" style="white-space:pre;">--------</text></svg>
<svg style="left:385.025px;top:324px" width="10" height="30"><text x="0" y="20.90" font-family="Liberation Sans" font-size="5.6" fill="#222" textLength="15" lengthAdjust="spacingAndGlyphs" style="white-space:pre;">--------</text></svg>
<svg style="left:403.95px;top:324px" width="10" height="30"><text x="0" y="20.90" font-family="Liberation Sans" font-size="5.6" fill="#222" textLength="15" lengthAdjust="spacingAndGlyphs" style="white-space:pre;">--------</text></svg>
<svg style="left:422.87499999999994px;top:324px" width="10" height="30"><text x="0" y="20.90" font-family="Liberation Sans" font-size="5.6" fill="#222" textLength="15" lengthAdjust="spacingAndGlyphs" style="white-space:pre;">--------</text></svg>
<svg style="left:441.79999999999995px;top:324px" width="10" height="30"><text x="0" y="20.90" font-family="Liberation Sans" font-size="5.6" fill="#222" textLength="15" lengthAdjust="spacingAndGlyphs" style="white-space:pre;">--------</text></svg>
<svg style="left:460.72499999999997px;top:324px" width="10" height="30"><text x="0" y="20.90" font-family="Liberation Sans" font-size="5.6" fill="#222" textLength="15" lengthAdjust="spacingAndGlyphs" style="white-space:pre;">--------</text></svg>
<svg style="left:479.65px;top:324px" width="10" height="30"><text x="0" y="20.90" font-family="Liberation Sans" font-size="5.6" fill="#222" textLength="15" lengthAdjust="spacingAndGlyphs" style="white-space:pre;">--------</text></svg>
<svg style="left:498.575px;top:324px" width="10" height="30"><text x="0" y="20.90" font-family="Liberation Sans" font-size="5.6" fill="#222" textLength="15" lengthAdjust="spacingAndGlyphs" style="white-space:pre;">--------</text></svg>
<svg style="left:517.5px;top:324px" width="10" height="30"><text x="0" y="20.90" font-family="Liberation Sans" font-size="5.6" fill="#222" textLength="15" lengthAdjust="spacingAndGlyphs" style="white-space:pre;">--------</text></svg>
<svg style="left:536.525px;top:325px" width="10" height="30"><text x="0" y="20.00" font-family="Liberation Sans" font-size="5.6" fill="#1a1a1a" textLength="11.2" lengthAdjust="spacingAndGlyphs" style="white-space:pre;">NOK</text></svg>
<svg style="left:555.35px;top:324px" width="10" height="30"><text x="0" y="20.90" font-family="Liberation Sans" font-size="5.6" fill="#222" textLength="15" lengthAdjust="spacingAndGlyphs" style="white-space:pre;">--------</text></svg>
<svg style="left:574.2750000000001px;top:324px" width="10" height="30"><text x="0" y="20.90" font-family="Liberation Sans" font-size="5.6" fill="#222" textLength="15" lengthAdjust="spacingAndGlyphs" style="white-space:pre;">--------</text></svg>
<svg style="left:164.9px;top:334px" width="10" height="30"><text x="0" y="20.80" font-family="Liberation Sans" font-size="5.6" fill="#1a1a1a" textLength="189.6" lengthAdjust="spacingAndGlyphs" style="white-space:pre;">LAVAR FILTROS DE AR DO EVAPORADOR (QUANDO RECUPERÃ•VEL ),</text></svg>
<svg style="left:164.9px;top:343px" width="10" height="30"><text x="0" y="20.90" font-family="Liberation Sans" font-size="5.6" fill="#1a1a1a" textLength="93.6" lengthAdjust="spacingAndGlyphs" style="white-space:pre;">TROCAR QUANDO DESCARTÃ•VEL</text></svg>
<svg style="left:366.09999999999997px;top:334px" width="10" height="30"><text x="0" y="20.70" font-family="Liberation Sans" font-size="5.6" fill="#222" textLength="15" lengthAdjust="spacingAndGlyphs" style="white-space:pre;">--------</text></svg>
<svg style="left:385.025px;top:334px" width="10" height="30"><text x="0" y="20.70" font-family="Liberation Sans" font-size="5.6" fill="#222" textLength="15" lengthAdjust="spacingAndGlyphs" style="white-space:pre;">--------</text></svg>
<svg style="left:403.95px;top:334px" width="10" height="30"><text x="0" y="20.70" font-family="Liberation Sans" font-size="5.6" fill="#222" textLength="15" lengthAdjust="spacingAndGlyphs" style="white-space:pre;">--------</text></svg>
<svg style="left:422.87499999999994px;top:334px" width="10" height="30"><text x="0" y="20.70" font-family="Liberation Sans" font-size="5.6" fill="#222" textLength="15" lengthAdjust="spacingAndGlyphs" style="white-space:pre;">--------</text></svg>
<svg style="left:441.79999999999995px;top:334px" width="10" height="30"><text x="0" y="20.70" font-family="Liberation Sans" font-size="5.6" fill="#222" textLength="15" lengthAdjust="spacingAndGlyphs" style="white-space:pre;">--------</text></svg>
<svg style="left:460.72499999999997px;top:334px" width="10" height="30"><text x="0" y="20.70" font-family="Liberation Sans" font-size="5.6" fill="#222" textLength="15" lengthAdjust="spacingAndGlyphs" style="white-space:pre;">--------</text></svg>
<svg style="left:479.65px;top:334px" width="10" height="30"><text x="0" y="20.70" font-family="Liberation Sans" font-size="5.6" fill="#222" textLength="15" lengthAdjust="spacingAndGlyphs" style="white-space:pre;">--------</text></svg>
<svg style="left:498.575px;top:334px" width="10" height="30"><text x="0" y="20.70" font-family="Liberation Sans" font-size="5.6" fill="#222" textLength="15" lengthAdjust="spacingAndGlyphs" style="white-space:pre;">--------</text></svg>
<svg style="left:517.5px;top:334px" width="10" height="30"><text x="0" y="20.70" font-family="Liberation Sans" font-size="5.6" fill="#222" textLength="15" lengthAdjust="spacingAndGlyphs" style="white-space:pre;">--------</text></svg>
<svg style="left:536.525px;top:334px" width="10" height="30"><text x="0" y="20.80" font-family="Liberation Sans" font-size="5.6" fill="#1a1a1a" textLength="11.2" lengthAdjust="spacingAndGlyphs" style="white-space:pre;">NOK</text></svg>
<svg style="left:555.35px;top:334px" width="10" height="30"><text x="0" y="20.70" font-family="Liberation Sans" font-size="5.6" fill="#222" textLength="15" lengthAdjust="spacingAndGlyphs" style="white-space:pre;">--------</text></svg>
<svg style="left:574.2750000000001px;top:334px" width="10" height="30"><text x="0" y="20.70" font-family="Liberation Sans" font-size="5.6" fill="#222" textLength="15" lengthAdjust="spacingAndGlyphs" style="white-space:pre;">--------</text></svg>
<svg style="left:164.9px;top:352px" width="10" height="30"><text x="0" y="20.80" font-family="Liberation Sans" font-size="5.6" fill="#1a1a1a" textLength="188.6" lengthAdjust="spacingAndGlyphs" style="white-space:pre;">LAVAR AS BANDEJAS E SERPENTINAS COM REMOÃ‡AO DO MOTILME</text></svg>
<svg style="left:164.9px;top:361px" width="10" height="30"><text x="0" y="20.90" font-family="Liberation Sans" font-size="5.6" fill="#1a1a1a" textLength="160.6" lengthAdjust="spacingAndGlyphs" style="white-space:pre;">(LODO) SEM O USO DE PRODUTOS DESENGRA.XANTES OU</text></svg>
<svg style="left:164.9px;top:371px" width="10" height="30"><text x="0" y="20.00" font-family="Liberation Sans" font-size="5.6" fill="#1a1a1a" textLength="37.6" lengthAdjust="spacingAndGlyphs" style="white-space:pre;">CORROSIVOS</text></svg>
<svg style="left:366.09999999999997px;top:352px" width="10" height="30"><text x="0" y="20.70" font-family="Liberation Sans" font-size="5.6" fill="#222" textLength="15" lengthAdjust="spacingAndGlyphs" style="white-space:pre;">--------</text></svg>
<svg style="left:385.025px;top:352px" width="10" height="30"><text x="0" y="20.70" font-family="Liberation Sans" font-size="5.6" fill="#222" textLength="15" lengthAdjust="spacingAndGlyphs" style="white-space:pre;">--------</text></svg>
<svg style="left:403.95px;top:352px" width="10" height="30"><text x="0" y="20.70" font-family="Liberation Sans" font-size="5.6" fill="#222" textLength="15" lengthAdjust="spacingAndGlyphs" style="white-space:pre;">--------</text></svg>
<svg style="left:555.35px;top:352px" width="10" height="30"><text x="0" y="20.70" font-family="Liberation Sans" font-size="5.6" fill="#222" textLength="15" lengthAdjust="spacingAndGlyphs" style="white-space:pre;">--------</text></svg>
<svg style="left:574.2750000000001px;top:352px" width="10" height="30"><text x="0" y="20.70" font-family="Liberation Sans" font-size="5.6" fill="#222" textLength="15" lengthAdjust="spacingAndGlyphs" style="white-space:pre;">--------</text></svg>
<svg style="left:164.9px;top:382px" width="10" height="30"><text x="0" y="20.10" font-family="Liberation Sans" font-size="5.6" fill="#1a1a1a" textLength="193.6" lengthAdjust="spacingAndGlyphs" style="white-space:pre;">EFETUAR LIMPEZA DO (S) TUTOR (ES) E CARCAÃ‡A PARTES INTERNAS</text></svg>
<svg style="left:366.09999999999997px;top:382px" width="10" height="30"><text x="0" y="20.00" font-family="Liberation Sans" font-size="5.6" fill="#222" textLength="15" lengthAdjust="spacingAndGlyphs" style="white-space:pre;">--------</text></svg>
<svg style="left:385.025px;top:382px" width="10" height="30"><text x="0" y="20.00" font-family="Liberation Sans" font-size="5.6" fill="#222" textLength="15" lengthAdjust="spacingAndGlyphs" style="white-space:pre;">--------</text></svg>
<svg style="left:403.95px;top:382px" width="10" height="30"><text x="0" y="20.00" font-family="Liberation Sans" font-size="5.6" fill="#222" textLength="15" lengthAdjust="spacingAndGlyphs" style="white-space:pre;">--------</text></svg>
<svg style="left:555.35px;top:382px" width="10" height="30"><text x="0" y="20.00" font-family="Liberation Sans" font-size="5.6" fill="#222" textLength="15" lengthAdjust="spacingAndGlyphs" style="white-space:pre;">--------</text></svg>
<svg style="left:574.2750000000001px;top:382px" width="10" height="30"><text x="0" y="20.00" font-family="Liberation Sans" font-size="5.6" fill="#222" textLength="15" lengthAdjust="spacingAndGlyphs" style="white-space:pre;">--------</text></svg>
<svg style="left:164.9px;top:391px" width="10" height="30"><text x="0" y="20.20" font-family="Liberation Sans" font-size="5.6" fill="#1a1a1a" textLength="167.6" lengthAdjust="spacingAndGlyphs" style="white-space:pre;">AQUECEDOR DE AR VERIFICAR E ELIMINAR SUJEIRA, DANO E</text></svg>
<svg style="left:164.9px;top:400px" width="10" height="30"><text x="0" y="20.30" font-family="Liberation Sans" font-size="5.6" fill="#1a1a1a" textLength="35.5" lengthAdjust="spacingAndGlyphs" style="white-space:pre;">CORROSÃ/O</text></svg>
<svg style="left:366.09999999999997px;top:391px" width="10" height="30"><text x="0" y="20.10" font-family="Liberation Sans" font-size="5.6" fill="#222" textLength="15" lengthAdjust="spacingAndGlyphs" style="white-space:pre;">--------</text></svg>
<svg style="left:385.025px;top:391px" width="10" height="30"><text x="0" y="20.10" font-family="Liberation Sans" font-size="5.6" fill="#222" textLength="15" lengthAdjust="spacingAndGlyphs" style="white-space:pre;">--------</text></svg>
<svg style="left:403.95px;top:391px" width="10" height="30"><text x="0" y="20.10" font-family="Liberation Sans" font-size="5.6" fill="#222" textLength="15" lengthAdjust="spacingAndGlyphs" style="white-space:pre;">--------</text></svg>
<svg style="left:498.675px;top:391px" width="10" height="30"><text x="0" y="20.20" font-family="Liberation Sans" font-size="5.6" fill="#1a1a1a" textLength="11.2" lengthAdjust="spacingAndGlyphs" style="white-space:pre;">NOK</text></svg>
<svg style="left:555.35px;top:391px" width="10" height="30"><text x="0" y="20.10" font-family="Liberation Sans" font-size="5.6" fill="#222" textLength="15" lengthAdjust="spacingAndGlyphs" style="white-space:pre;">--------</text></svg>
<svg style="left:574.2750000000001px;top:391px" width="10" height="30"><text x="0" y="20.10" font-family="Liberation Sans" font-size="5.6" fill="#222" textLength="15" lengthAdjust="spacingAndGlyphs" style="white-space:pre;">--------</text></svg>
<svg style="left:164.9px;top:409px" width="10" height="30"><text x="0" y="20.80" font-family="Liberation Sans" font-size="5.6" fill="#1a1a1a" textLength="162.2" lengthAdjust="spacingAndGlyphs" style="white-space:pre;">AJUSTAR A GAXETA DA HASTE DA VÃ¡LVULA DE CONTROLE</text></svg>
<svg style="left:366.09999999999997px;top:409px" width="10" height="30"><text x="0" y="20.70" font-family="Liberation Sans" font-size="5.6" fill="#222" textLength="15" lengthAdjust="spacingAndGlyphs" style="white-space:pre;">--------</text></svg>
<svg style="left:385.025px;top:409px" width="10" height="30"><text x="0" y="20.70" font-family="Liberation Sans" font-size="5.6" fill="#222" textLength="15" lengthAdjust="spacingAndGlyphs" style="white-space:pre;">--------</text></svg>
<svg style="left:403.95px;top:409px" width="10" height="30"><text x="0" y="20.70" font-family="Liberation Sans" font-size="5.6" fill="#222" textLength="15" lengthAdjust="spacingAndGlyphs" style="white-space:pre;">--------</text></svg>
<svg style="left:498.675px;top:409px" width="10" height="30"><text x="0" y="20.80" font-family="Liberation Sans" font-size="5.6" fill="#1a1a1a" textLength="11.2" lengthAdjust="spacingAndGlyphs" style="white-space:pre;">NOK</text></svg>
<svg style="left:555.35px;top:409px" width="10" height="30"><text x="0" y="20.70" font-family="Liberation Sans" font-size="5.6" fill="#222" textLength="15" lengthAdjust="spacingAndGlyphs" style="white-space:pre;">--------</text></svg>
<svg style="left:574.2750000000001px;top:409px" width="10" height="30"><text x="0" y="20.70" font-family="Liberation Sans" font-size="5.6" fill="#222" textLength="15" lengthAdjust="spacingAndGlyphs" style="white-space:pre;">--------</text></svg>
<div class="a" style="left:0px;top:429px;width:800px;height:21px;background:#000"></div>
<div class="a" style="left:204px;top:429px;width:411px;height:21px;background:#232323"></div>
<div class="a" style="left:107px;top:429px;width:40px;height:21px;background:#161616"></div>
<div class="a" style="left:615px;top:429px;width:41px;height:21px;background:#121212"></div>
<div class="a" style="left:656px;top:429px;width:8px;height:21px;background:#1e1e1e"></div>
<svg style="left:205px;top:428px" width="10" height="30"><text x="0" y="20.50" font-family="Liberation Sans" font-size="5.6" fill="#555" textLength="31.5" lengthAdjust="spacingAndGlyphs" style="white-space:pre;">BA-000002 -</text></svg>
<div class="a" style="left:364.4px;top:429px;width:0.9px;height:3px;background:#3a3a3a"></div>
<div class="a" style="left:383.325px;top:429px;width:0.9px;height:3px;background:#3a3a3a"></div>
<div class="a" style="left:402.25px;top:429px;width:0.9px;height:3px;background:#3a3a3a"></div>
<div class="a" style="left:421.17499999999995px;top:429px;width:0.9px;height:3px;background:#3a3a3a"></div>
<div class="a" style="left:440.09999999999997px;top:429px;width:0.9px;height:3px;background:#3a3a3a"></div>
<div class="a" style="left:459.025px;top:429px;width:0.9px;height:3px;background:#3a3a3a"></div>
<div class="a" style="left:477.95px;top:429px;width:0.9px;height:3px;background:#3a3a3a"></div>
<div class="a" style="left:496.875px;top:429px;width:0.9px;height:3px;background:#3a3a3a"></div>
<div class="a" style="left:515.8px;top:429px;width:0.9px;height:3px;background:#3a3a3a"></div>
<div class="a" style="left:534.725px;top:429px;width:0.9px;height:3px;background:#3a3a3a"></div>
<div class="a" style="left:553.65px;top:429px;width:0.9px;height:3px;background:#3a3a3a"></div>
<div class="a" style="left:572.575px;top:429px;width:0.9px;height:3px;background:#3a3a3a"></div>
<div class="a" style="left:591.5px;top:429px;width:0.9px;height:3px;background:#3a3a3a"></div>
<svg style="left:8px;top:434.8px" width="10" height="10"><path d="M0 1.2L3.9 0.6V4.1H0Z M4.5 0.5L9 0V4.1H4.5Z M0 4.7H3.9V8.2L0 7.6Z M4.5 4.7H9V8.8L4.5 8.2Z" fill="#fff"/></svg>
<div class="a" style="left:25px;top:429px;width:179px;height:21px;background:#333"></div>
<svg style="left:30px;top:434.4px" width="12" height="12"><circle cx="5.6" cy="5.5" r="4.9" fill="none" stroke="#f4f4f4" stroke-width="1.3"/></svg>
<svg style="left:46.25px;top:422px" width="10" height="30"><text x="0" y="20.40" font-family="Liberation Sans" font-size="7.1" fill="#c4c4c4" textLength="85.5" lengthAdjust="spacingAndGlyphs" style="white-space:pre;">Digite aqui para pesquisar</text></svg>
<svg style="left:190.5px;top:435px" width="6" height="9"><rect x="0.9" y="0" width="4" height="5.6" rx="2" fill="#8a8a8a"/><path d="M0.3 4.2Q2.9 7.8 5.5 4.2" fill="none" stroke="#8a8a8a" stroke-width="0.7"/><rect x="2.5" y="6.2" width="0.8" height="2" fill="#8a8a8a"/></svg>
<svg style="left:210.5px;top:435px" width="13" height="10"><rect x="3" y="0.5" width="6" height="7.8" fill="none" stroke="#d8d8d8" stroke-width="0.8"/><path d="M1.2 1.8V7.2M10.8 1.8V7.2" stroke="#d8d8d8" stroke-width="0.8"/></svg>
<div class="a" style="left:257.4px;top:429px;width:23.2px;height:21px;background:#3c3c3c"></div>
<div class="a" style="left:233px;top:449px;width:21px;height:1px;background:#76b9ed"></div>
<div class="a" style="left:258px;top:449px;width:22px;height:1px;background:#76b9ed"></div>
<div class="a" style="left:285px;top:449px;width:21px;height:1px;background:#76b9ed"></div>
<div class="a" style="left:310px;top:449px;width:22px;height:1px;background:#76b9ed"></div>
<div class="a" style="left:336px;top:449px;width:22px;height:1px;background:#76b9ed"></div>
<svg style="left:236.5px;top:433px" width="12" height="12"><rect x="0.3" y="0.3" width="11" height="11" fill="#262000" stroke="#e8d200" stroke-width="0.8"/><text x="1.6" y="8.2" font-family="Liberation Sans" font-weight="bold" font-size="6.2" fill="#e8d200">Fw</text></svg>
<svg style="left:262.5px;top:433px" width="12" height="12"><circle cx="6" cy="6" r="5.6" fill="#db4437"/><path d="M6 6L0.8 8.9A5.6 5.6 0 0 1 1.5 2.7Z" fill="#0f9d58"/><path d="M6 6L11.2 8.9A5.6 5.6 0 0 1 0.8 8.9Z" fill="#0f9d58"/><path d="M6 6L11.6 6A5.6 5.6 0 0 1 6 11.6Z" fill="#f4b400"/><path d="M6 6L11.6 6A5.6 5.6 0 0 0 10.8 3.2Z" fill="#db4437"/><circle cx="6" cy="6" r="2.6" fill="#fff"/><circle cx="6" cy="6" r="2" fill="#4285f4"/></svg>
<svg style="left:288.5px;top:432.5px" width="13" height="13"><ellipse cx="6" cy="7" rx="5.5" ry="4.5" fill="#d6dde6"/><circle cx="3.5" cy="5.5" r="1" fill="#e44"/><circle cx="5.5" cy="4.2" r="1" fill="#4a4"/><circle cx="8" cy="4.8" r="1" fill="#48e"/><circle cx="3.6" cy="8.3" r="1" fill="#ec3"/><path d="M11.8 0.5L6.5 9.5" stroke="#e0a040" stroke-width="1.4"/></svg>
<svg style="left:314.5px;top:433px" width="12" height="12"><rect x="4" y="1" width="7.5" height="10" fill="#fff" stroke="#2b579a" stroke-width="0.6"/><path d="M6 3H10.5M6 5H10.5M6 7H10.5M6 9H10.5" stroke="#7fa0d0" stroke-width="0.6"/><rect x="0.2" y="1.8" width="6.8" height="8.4" fill="#2b579a"/><text x="0.8" y="8.6" font-family="Liberation Sans" font-weight="bold" font-size="6" fill="#fff">W</text></svg>
<svg style="left:340.5px;top:433px" width="12" height="12"><rect x="4" y="1" width="7.5" height="10" fill="#fff" stroke="#217346" stroke-width="0.6"/><path d="M6 3H10.5M6 5H10.5M6 7H10.5M6 9H10.5" stroke="#7fbf9a" stroke-width="0.6"/><rect x="0.2" y="1.8" width="6.8" height="8.4" fill="#217346"/><text x="1.4" y="8.6" font-family="Liberation Sans" font-weight="bold" font-size="6" fill="#fff">X</text></svg>
<svg style="left:674.5px;top:436.5px" width="8" height="5"><path d="M0.5 4.3L3.5 1L6.5 4.3" fill="none" stroke="#e0e0e0" stroke-width="0.8"/></svg>
<svg style="left:686.5px;top:434.5px" width="8" height="10"><path d="M2 0.3L4 1.6L2 2.9L0 1.6Z M6 0.3L8 1.6L6 2.9L4 1.6Z M2 3.1L4 4.4L2 5.7L0 4.4Z M6 3.1L8 4.4L6 5.7L4 4.4Z M4 4.9L5.9 6.1L4 7.3L2.1 6.1Z" fill="#f4f4f4"/><path d="M1.2 5.9V7L4 8.5L6.8 7V5.9" fill="none" stroke="#f4f4f4" stroke-width="0.6"/></svg>
<svg style="left:699px;top:436.5px" width="10" height="7"><rect x="0.8" y="1.2" width="7.6" height="4.6" fill="#e8e8e8"/><rect x="0" y="0" width="2" height="1.6" fill="#e8e8e8"/></svg>
<svg style="left:712.5px;top:435.5px" width="8" height="8"><path d="M0.5 7.3A6.8 6.8 0 0 1 7.3 0.5M2.3 7.3A5 5 0 0 1 7.3 2.3M4.1 7.3A3.2 3.2 0 0 1 7.3 4.1" fill="none" stroke="#bbb" stroke-width="0.6"/></svg>
<svg style="left:723.5px;top:436px" width="9" height="8"><path d="M0.4 2.5H1.8L3.7 0.5V7.3L1.8 5.3H0.4Z" fill="none" stroke="#ddd" stroke-width="0.6"/><path d="M5.3 2.5L7.8 5M7.8 2.5L5.3 5" stroke="#ddd" stroke-width="0.6"/></svg>
<svg style="left:746px;top:417px" width="10" height="30"><text x="0" y="20.20" font-family="Liberation Sans" font-size="6.2" fill="#fff" textLength="14.2" lengthAdjust="spacingAndGlyphs" style="white-space:pre;">22:36</text></svg>
<svg style="left:737.4px;top:426px" width="10" height="30"><text x="0" y="20.90" font-family="Liberation Sans" font-size="6.3" fill="#fff" textLength="31.7" lengthAdjust="spacingAndGlyphs" style="white-space:pre;">23/11/2017</text></svg>
<svg style="left:778.5px;top:435.5px" width="14" height="14"><path d="M0.5 0.5H9.5V7.5H4L2 9.2V7.5H0.5Z" fill="#f2f2f2"/><path d="M2 2.5H8M2 4.5H8" stroke="#888" stroke-width="0.5"/><circle cx="8.8" cy="9" r="2.9" fill="#000" stroke="#f2f2f2" stroke-width="0.7"/><text x="7.6" y="10.7" font-family="Liberation Sans" font-size="4.5" fill="#fff">8</text></svg>
<div class="a" style="left:795.5px;top:429px;width:0.7px;height:21px;background:#555"></div>
</body></html>
